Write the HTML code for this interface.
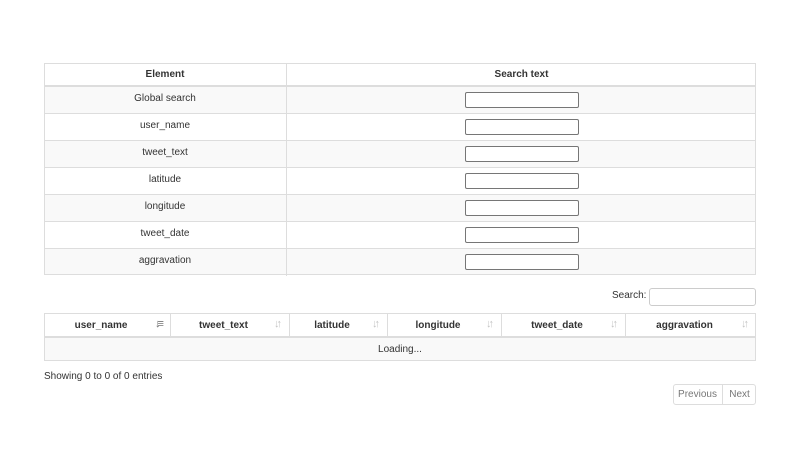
<!DOCTYPE html>
<html><head><style>
body{margin:0;width:800px;height:450px;background:#fff;font-family:"Liberation Sans",sans-serif;font-size:10px;color:#333;position:relative;overflow:hidden}
.a{position:absolute;white-space:nowrap}
.c{position:absolute;display:flex;align-items:center;justify-content:center;box-sizing:border-box;white-space:nowrap}
.inp{position:absolute;width:114px;height:16px;border:1px solid #767676;border-radius:2px;box-sizing:border-box;background:#fff}
.th{font-weight:bold;color:#333}
.sort{position:absolute;color:#c4c4c4;font-size:11px;letter-spacing:-3px;font-weight:bold}
</style></head><body>
<div id="rows"></div>
<script>
var names=["Global search","user_name","tweet_text","latitude","longitude","tweet_date","aggravation"];
var h="";
for(var i=0;i<7;i++){var y=87+i*27;
if(i%2==0)h+='<div class="a" style="left:45px;top:'+y+'px;width:710px;height:26px;background:#f9f9f9"></div>';
if(i>0)h+='<div class="a" style="left:45px;top:'+(y-1)+'px;width:710px;height:1px;background:#ddd"></div>';
h+='<div class="a" style="left:286px;top:'+y+'px;width:1px;height:27px;background:#ddd"></div>';
h+='<div class="c" style="left:44px;top:'+(y-2)+'px;width:242px;height:27px">'+names[i]+'</div>';
h+='<div class="inp" style="left:465px;top:'+(y+5)+'px"></div>';}
document.getElementById("rows").innerHTML=h;
</script>
<div class="a" style="left:44px;top:63px;width:712px;height:212px;border:1px solid #ddd;box-sizing:border-box"></div>
<div class="a" style="left:286px;top:63px;width:1px;height:24px;background:#ddd"></div>
<div class="a" style="left:44px;top:85px;width:712px;height:2px;background:#ddd"></div>
<div class="c th" style="left:44px;top:63px;width:242px;height:23px">Element</div>
<div class="c th" style="left:287px;top:63px;width:469px;height:23px">Search text</div>
<div class="a" style="left:612px;top:290px">Search:</div>
<div class="a" style="left:649px;top:288px;width:107px;height:18px;border:1px solid #ccc;border-radius:3px;box-sizing:border-box"></div>
<div class="a" style="left:45px;top:337px;width:710px;height:23px;background:#f9f9f9"></div>
<div class="a" style="left:44px;top:313px;width:712px;height:48px;border:1px solid #ddd;box-sizing:border-box"></div>
<div class="a" style="left:44px;top:336px;width:712px;height:2px;background:#ddd"></div>
<div id="hd"></div>
<script>
var cols=[["user_name",44,170],["tweet_text",170,289],["latitude",289,387],["longitude",387,501],["tweet_date",501,625],["aggravation",625,756]];
var s="";
cols.forEach(function(c,i){
if(i>0)s+='<div class="a" style="left:'+c[1]+'px;top:313px;width:1px;height:24px;background:#ddd"></div>';
s+='<div class="c th" style="left:'+c[1]+'px;top:313px;width:'+(c[2]-c[1]-12)+'px;height:24px">'+c[0]+'</div>';
s+='<div class="sort" style="left:'+(c[2]-15)+'px;top:318px;'+(i==0?'color:#777':'')+'">'+(i==0?'↓≡':'↓↑')+'</div>';
});
document.getElementById("hd").innerHTML=s;
</script>
<div class="c" style="left:44px;top:337px;width:712px;height:24px">Loading...</div>
<div class="a" style="left:44px;top:371px">Showing 0 to 0 of 0 entries</div>
<div class="a" style="left:673px;top:384px;width:83px;height:21px;border:1px solid #ddd;border-radius:3px;box-sizing:border-box"></div>
<div class="a" style="left:722px;top:384px;width:1px;height:21px;background:#ddd"></div>
<div class="c" style="left:673px;top:384px;width:49px;height:21px;color:#777">Previous</div>
<div class="c" style="left:723px;top:384px;width:33px;height:21px;color:#777">Next</div>
</body></html>
